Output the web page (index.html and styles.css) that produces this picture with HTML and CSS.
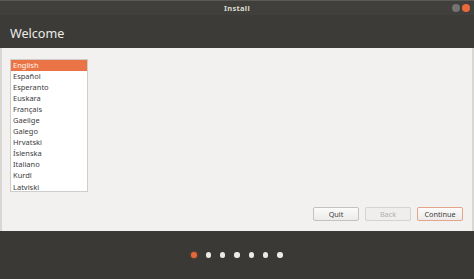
FILE: index.html
```html
<!DOCTYPE html>
<html lang="en">
<head>
    <meta charset="UTF-8">
    <meta name="viewport" content="width=device-width, initial-scale=1.0">
    <title>Install</title>
    <link rel="stylesheet" href="styles.css">
</head>
<body>
    <div class="window">
        <div class="titlebar">
            <span class="title">Install</span>
            <div class="controls">
                <span class="btn-min"></span>
                <span class="btn-close"></span>
            </div>
        </div>
        <div class="header">
            <h1>Welcome</h1>
        </div>
        <div class="content">
            <ul class="languages">
                <li class="selected">English</li>
                <li>Español</li>
                <li>Esperanto</li>
                <li>Euskara</li>
                <li>Français</li>
                <li>Gaeilge</li>
                <li>Galego</li>
                <li>Hrvatski</li>
                <li>Íslenska</li>
                <li>Italiano</li>
                <li>Kurdî</li>
                <li>Latviski</li>
            </ul>
            <div class="buttons">
                <button>Quit</button>
                <button class="disabled">Back</button>
                <button class="primary">Continue</button>
            </div>
        </div>
        <div class="footer">
            <span class="dot active"></span>
            <span class="dot"></span>
            <span class="dot"></span>
            <span class="dot"></span>
            <span class="dot"></span>
            <span class="dot"></span>
            <span class="dot"></span>
        </div>
    </div>
</body>
</html>
```

FILE: styles.css
```css
*{
    margin: 0;
    padding: 0;
    box-sizing: border-box;
}
body{
    width: 474px;
    height: 279px;
    overflow: hidden;
    font-family: "Noto Sans", "DejaVu Sans", sans-serif;
    background-color: #3c3b37;
}
.window{
    display: flex;
    flex-direction: column;
    height: 279px;
}
.titlebar{
    height: 15px;
    background-color: #403f3b;
    border-top: 1px solid #5a5955;
    display: flex;
    justify-content: center;
    align-items: center;
    position: relative;
}
.title{
    color: #dfdbd2;
    font-size: 7.5px;
    font-weight: bold;
    letter-spacing: 0.3px;
}
.controls{
    position: absolute;
    right: 4px;
    top: 3px;
    display: flex;
    gap: 2px;
}
.btn-min,
.btn-close{
    width: 8px;
    height: 8px;
    border-radius: 50%;
}
.btn-min{
    background-color: #74736f;
}
.btn-close{
    background-color: #e9693a;
}
.header{
    height: 33px;
    background-color: #3c3b37;
    padding-left: 10px;
    padding-top: 3px;
    display: flex;
    align-items: center;
}
h1{
    color: #eeece8;
    font-size: 12.6px;
    font-weight: normal;
}
.content{
    flex: 1;
    background-color: #f2f1f0;
    border-left: 2px solid #d9d7d4;
    border-right: 2px solid #d9d7d4;
    padding: 11px 9px 10px 8px;
    display: flex;
    flex-direction: column;
    justify-content: space-between;
}
.languages{
    list-style: none;
    width: 78px;
    height: 133px;
    background-color: #ffffff;
    border: 1px solid #cfcdca;
    overflow: hidden;
}
.languages li{
    height: 11.05px;
    line-height: 11px;
    font-size: 7.5px;
    color: #3c3c3c;
    padding-left: 2px;
}
.languages li.selected{
    background-color: #eb7446;
    color: #fff5ef;
}
.buttons{
    display: flex;
    justify-content: flex-end;
    gap: 6px;
}
button{
    width: 46px;
    height: 14px;
    font-family: "Noto Sans", "DejaVu Sans", sans-serif;
    font-size: 7.3px;
    color: #3c3c3c;
    background: linear-gradient(#fbfbfa, #ecebe9);
    border: 1px solid #c4c2bf;
    border-radius: 2px;
}
button.disabled{
    color: #b3b1ae;
    background: #efeeec;
    border-color: #d5d3d0;
}
button.primary{
    border-color: #e2a58c;
}
.footer{
    height: 48px;
    background-color: #3a3935;
    display: flex;
    justify-content: center;
    align-items: center;
    gap: 9px;
}
.dot{
    width: 5.3px;
    height: 5.3px;
    border-radius: 50%;
    background-color: #ebeae8;
}
.dot.active{
    background-color: #e5673a;
    box-shadow: 0 0 3px rgba(233, 100, 50, 0.5);
}
```
